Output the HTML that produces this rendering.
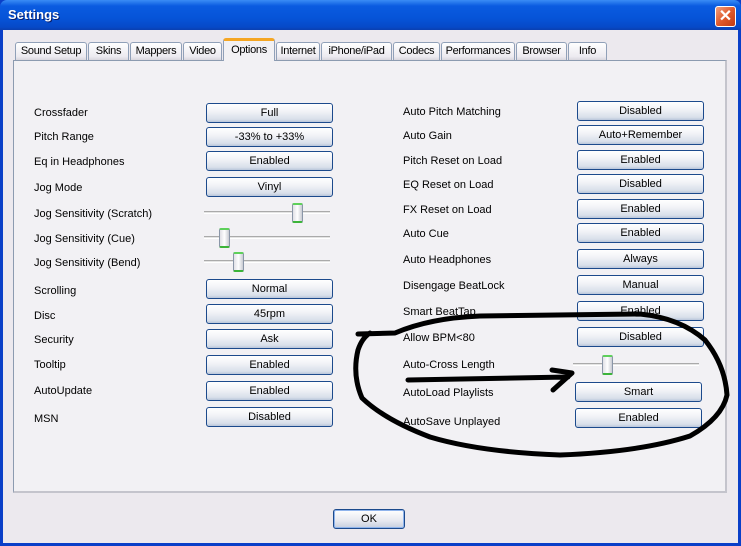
<!DOCTYPE html><html><head><style>
*{margin:0;padding:0;box-sizing:border-box}
body{width:741px;height:546px;overflow:hidden;background:#0a3fc8;font-family:"Liberation Sans",sans-serif;font-size:11px;color:#000;position:relative}
.title{position:absolute;left:0;top:0;width:741px;height:30px;background:linear-gradient(#3a8cf5 0%,#0a5be0 20%,#0654d8 60%,#0649c8 90%,#0a3fb0 100%);border-radius:7px 7px 0 0}
.title span{position:absolute;left:8px;top:7px;color:#fff;font-weight:bold;font-size:13px;text-shadow:1px 1px #0a1e6a}
.close{position:absolute;left:715px;top:6px;width:21px;height:21px;background:linear-gradient(135deg,#f0a080,#e05a2c 50%,#c23b12);border:1px solid #fff;border-radius:3px;color:#fff;font-weight:bold;font-size:16px;line-height:19px;text-align:center}
.win{position:absolute;left:3px;top:30px;width:735px;height:513px;background:#ece9ee}
.panel{position:absolute;left:13px;top:60px;width:714px;height:433px;background:#f2f1f4;border:1px solid #8c9bb0;border-right:2px solid #c4c4cc;border-bottom:2px solid #c4c4cc}
.tab{position:absolute;top:42px;height:18px;background:linear-gradient(#fff,#eceaf0 80%,#d8d6de);border:1px solid #90a0b8;border-bottom:none;border-radius:3px 3px 0 0;text-align:center;line-height:17px;font-size:11px;letter-spacing:-0.3px;white-space:nowrap;overflow:hidden}
.tab.sel{top:38px;height:23px;background:#f2f1f4;border-top:3px solid #f5a623;line-height:18px;z-index:2}
.l{position:absolute;font-size:11px;margin-top:1px}
.b{position:absolute;width:127px;height:20px;border:1px solid #1c4a8c;border-radius:3px;background:linear-gradient(#fff 0%,#f2f3f7 40%,#d8dfea 85%,#b9c6da 100%);text-align:center;line-height:19px;font-size:11px}
.tr{position:absolute;height:3px;width:126px;border-top:1px solid #aaa;border-bottom:1px solid #fff;background:#e4e4e4}
.th{position:absolute;width:11px;height:20px;border:1px solid #8a96a8;border-radius:2px;background:linear-gradient(90deg,#e0e0e6,#fff 50%,#c8cad2);border-top:2px solid #5ed05a;border-bottom:2px solid #3cb43a}
.ok{position:absolute;left:333px;top:509px;width:72px;height:20px;border:1px solid #1c4a8c;border-radius:3px;background:linear-gradient(#fff,#e6e8ef 60%,#c6cede);box-shadow:inset 0 0 0 1px #8fb4ec;text-align:center;line-height:18px}
</style></head><body>
<div class="title"><span>Settings</span><div class="close">✕</div></div>
<div class="win"></div>
<div class="tab" style="left:15px;width:72px">Sound Setup</div>
<div class="tab" style="left:88px;width:41px">Skins</div>
<div class="tab" style="left:130px;width:52px">Mappers</div>
<div class="tab" style="left:183px;width:39px">Video</div>
<div class="tab sel" style="left:223px;width:52px">Options</div>
<div class="tab" style="left:276px;width:44px">Internet</div>
<div class="tab" style="left:321px;width:71px">iPhone/iPad</div>
<div class="tab" style="left:393px;width:47px">Codecs</div>
<div class="tab" style="left:441px;width:74px">Performances</div>
<div class="tab" style="left:516px;width:51px">Browser</div>
<div class="tab" style="left:568px;width:39px">Info</div>
<div class="panel"></div>

<div class="l" style="left:34px;top:106px">Crossfader</div><div class="b" style="left:206px;top:103px">Full</div>
<div class="l" style="left:34px;top:130px">Pitch Range</div><div class="b" style="left:206px;top:127px">-33% to +33%</div>
<div class="l" style="left:34px;top:155px">Eq in Headphones</div><div class="b" style="left:206px;top:151px">Enabled</div>
<div class="l" style="left:34px;top:181px">Jog Mode</div><div class="b" style="left:206px;top:177px">Vinyl</div>
<div class="l" style="left:34px;top:207px">Jog Sensitivity (Scratch)</div><div class="tr" style="left:204px;top:211px"></div><div class="th" style="left:292px;top:203px"></div>
<div class="l" style="left:34px;top:232px">Jog Sensitivity (Cue)</div><div class="tr" style="left:204px;top:236px"></div><div class="th" style="left:219px;top:228px"></div>
<div class="l" style="left:34px;top:256px">Jog Sensitivity (Bend)</div><div class="tr" style="left:204px;top:260px"></div><div class="th" style="left:233px;top:252px"></div>
<div class="l" style="left:34px;top:284px">Scrolling</div><div class="b" style="left:206px;top:279px">Normal</div>
<div class="l" style="left:34px;top:309px">Disc</div><div class="b" style="left:206px;top:304px">45rpm</div>
<div class="l" style="left:34px;top:333px">Security</div><div class="b" style="left:206px;top:329px">Ask</div>
<div class="l" style="left:34px;top:358px">Tooltip</div><div class="b" style="left:206px;top:355px">Enabled</div>
<div class="l" style="left:34px;top:384px">AutoUpdate</div><div class="b" style="left:206px;top:381px">Enabled</div>
<div class="l" style="left:34px;top:412px">MSN</div><div class="b" style="left:206px;top:407px">Disabled</div>

<div class="l" style="left:403px;top:105px">Auto Pitch Matching</div><div class="b" style="left:577px;top:101px">Disabled</div>
<div class="l" style="left:403px;top:129px">Auto Gain</div><div class="b" style="left:577px;top:125px">Auto+Remember</div>
<div class="l" style="left:403px;top:154px">Pitch Reset on Load</div><div class="b" style="left:577px;top:150px">Enabled</div>
<div class="l" style="left:403px;top:178px">EQ Reset on Load</div><div class="b" style="left:577px;top:174px">Disabled</div>
<div class="l" style="left:403px;top:203px">FX Reset on Load</div><div class="b" style="left:577px;top:199px">Enabled</div>
<div class="l" style="left:403px;top:227px">Auto Cue</div><div class="b" style="left:577px;top:223px">Enabled</div>
<div class="l" style="left:403px;top:253px">Auto Headphones</div><div class="b" style="left:577px;top:249px">Always</div>
<div class="l" style="left:403px;top:279px">Disengage BeatLock</div><div class="b" style="left:577px;top:275px">Manual</div>
<div class="l" style="left:403px;top:305px">Smart BeatTap</div><div class="b" style="left:577px;top:301px">Enabled</div>
<div class="l" style="left:403px;top:331px">Allow BPM&lt;80</div><div class="b" style="left:577px;top:327px">Disabled</div>
<div class="l" style="left:403px;top:358px">Auto-Cross Length</div><div class="tr" style="left:573px;top:363px"></div><div class="th" style="left:602px;top:355px"></div>
<div class="l" style="left:403px;top:386px">AutoLoad Playlists</div><div class="b" style="left:575px;top:382px">Smart</div>
<div class="l" style="left:403px;top:415px">AutoSave Unplayed</div><div class="b" style="left:575px;top:408px">Enabled</div>

<div class="ok">OK</div>

<svg style="position:absolute;left:0;top:0" width="741" height="546"><g fill="none" stroke="#000" stroke-width="5" stroke-linecap="round" stroke-linejoin="round">
<path d="M358 334 L395 333 Q430 318 480 316 L640 314 Q680 318 705 340 Q725 365 727 395 Q722 418 690 436 Q640 452 560 455 Q480 452 430 437 Q385 420 362 398 Q352 375 358 350 Q362 338 370 333"/>
<path d="M408 380 L568 377 M552 370 L572 373 L553 390"/>
</g></svg>
</body></html>
